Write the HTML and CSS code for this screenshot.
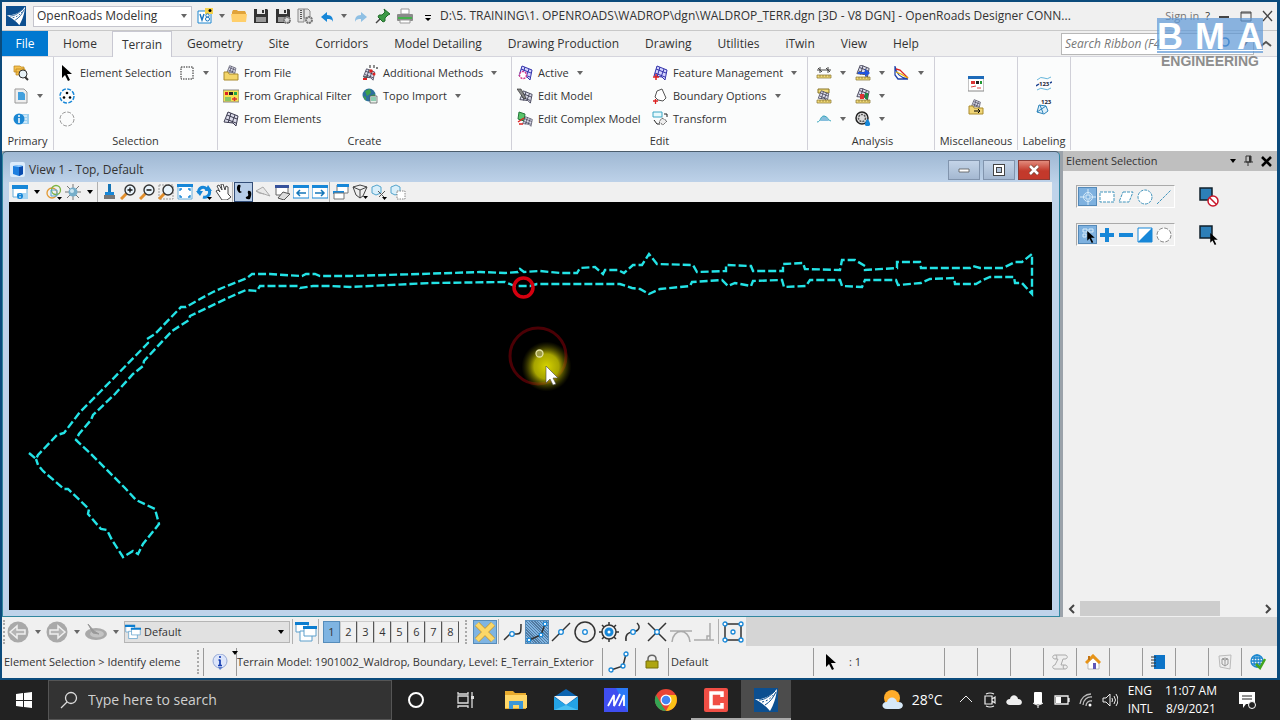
FILE: index.html
```
<!DOCTYPE html>
<html lang="en">
<head>
    <meta charset="UTF-8">
    <meta name="viewport" content="width=device-width, initial-scale=1.0">
    <title>OpenRoads Designer</title>
    <link rel="stylesheet" href="styles.css">
</head>
<body>
    <!-- Shared icons -->
    <svg class="sprite" aria-hidden="true">
        <symbol id="caret" viewBox="0 0 6 4"><path d="M0 0h6L3 4z" fill="currentColor"/></symbol>
        <symbol id="cursor" viewBox="0 0 16 16"><path d="M3 0v13l3-3 3 6 2-1-3-6h5z" fill="#000"/></symbol>
        <symbol id="mesh" viewBox="0 0 16 16"><path d="M5 1l10 4-2 10-3-3-9-1z" fill="#dcdcea" stroke="#3c3c50"/><path d="M4 4l10 4M3 8l10 4M8 2L5 12M12 4L9 12" stroke="#3c3c50" fill="none"/></symbol>
        <symbol id="meshblue" viewBox="0 0 16 16"><path d="M5 1l10 4-2 10-3-3-8-1z" fill="#d4d4ff" stroke="#33a"/><path d="M4 4l10 4M3 8l10 4M8 2L5 12M12 4L9 12" stroke="#33a" fill="none"/></symbol>
        <symbol id="ruler" viewBox="0 0 16 16"><path d="M1 12h14v3H1z" fill="#f3dc7a" stroke="#85702b" stroke-width=".7"/><path d="M4 12v2M7 12v2M10 12v2M13 12v2" stroke="#85702b" stroke-width=".7"/></symbol>
        <symbol id="folder" viewBox="0 0 16 16"><path d="M1 4l1-2h4l1 1h7l1 2v9H1z" fill="#e0a33a"/><path d="M0 6h16l-1 8H1z" fill="#ffcf6b"/></symbol>
        <symbol id="disk" viewBox="0 0 16 16"><path d="M1 1h13l1 1v13H1z" fill="#333"/><path d="M4 1h8v5H4z" fill="#e8e8e8"/><path d="M9 2h2v3H9z" fill="#333"/><path d="M3 9h10v5H3z" fill="#999"/></symbol>
        <symbol id="gear" viewBox="0 0 16 16"><circle cx="12" cy="12" r="3" fill="#ddd" stroke="#777" stroke-width="2" stroke-dasharray="2 .6"/></symbol>
        <symbol id="windows" viewBox="0 0 22 22"><g fill="#fff" stroke="#5c9fcb"><path d="M1 2h12v9H1z"/><path d="M5 10h12v10H5z"/><path d="M9 6h12v9H9z"/></g><path d="M0 1h14v3H0zM8 5h14v3H8z" fill="#0b7dd0"/></symbol>
        <symbol id="roads" viewBox="0 0 24 24"><path d="M0 0h24v24H0z" fill="#0c4f90"/><path d="M1 11C11 12 17 7 23 1c-1 9-3 15-7 22-3-4-8-8-15-12z" fill="#fff"/><path d="M5 12c6 0 11-4 16-9M11 17c5-3 8-7 11-13" fill="none" stroke="#0c4f90" stroke-width="1"/><path d="M8 14c6-1 9-4 13-9" fill="none" stroke="#0c4f90" stroke-dasharray="2 2"/></symbol>
        <symbol id="lens" viewBox="0 0 16 16"><path d="M7 9l-6 6" stroke="#e28f2d" stroke-width="3"/><circle cx="10" cy="6" r="5" fill="#e9f4fc" stroke="#333" stroke-width="1.4"/></symbol>
    </svg>

    <div class="app">
        <!-- Title bar -->
        <header class="titlebar">
            <svg class="logo"><use href="#roads"/></svg>
            <div class="select-wrap workflow">
                <select aria-label="Workflow"><option>OpenRoads Modeling</option></select>
                <svg class="caret"><use href="#caret"/></svg>
            </div>
            <div class="quick-access">
                <button aria-label="V8"><svg class="ic" viewBox="0 0 16 16"><path d="M1 3h13v12H1z" fill="#fff" stroke="#1d86d0"/><path d="M8 0h8v6H8z" fill="#f6d34b"/><path d="M3 6l2 6 2-6" fill="none" stroke="#1573bd" stroke-width="1.4"/><circle cx="10.500" cy="7.500" r="1.700" fill="none" stroke="#1573bd"/><circle cx="10.500" cy="11" r="2" fill="none" stroke="#1573bd"/><circle cx="13" cy="2.500" r="1.500"/></svg></button>
                <svg class="caret"><use href="#caret"/></svg>
                <button aria-label="Open"><svg class="ic"><use href="#folder"/></svg></button>
                <button aria-label="Save"><svg class="ic"><use href="#disk"/></svg></button>
                <button aria-label="Save settings"><svg class="ic"><use href="#disk"/><use href="#gear"/></svg></button>
                <button aria-label="Compress"><svg class="ic" viewBox="0 0 16 16"><path d="M1 1h6v13H1zM7 1h4l2 2v7H7z" fill="#e4e4e4" stroke="#888"/><path d="M4 2v9" stroke="#555" stroke-width="2" stroke-dasharray="1 1"/><use href="#gear" width="16" height="16"/></svg></button>
                <button aria-label="Undo"><svg class="ic" viewBox="0 0 16 16"><path d="M2 9l6-5v3c5 0 6 3 6 7-1-3-3-3-6-3v3z" fill="#1787d8"/></svg></button>
                <svg class="caret"><use href="#caret"/></svg>
                <button aria-label="Redo"><svg class="ic" viewBox="0 0 16 16"><path d="M14 9L8 4v3c-5 0-6 3-6 7 1-3 3-3 6-3v3z" fill="#8fc0e4"/></svg></button>
                <button aria-label="Pin"><svg class="ic" viewBox="0 0 16 16"><path d="M9 1l6 5-2 1-3 3v3l-2 1-5-5 1-2h3l3-3z" fill="#3c9a45" stroke="#226b2b"/><path d="M5 11l-4 4" stroke="#444" stroke-width="1.5"/></svg></button>
                <button aria-label="Print"><svg class="ic" viewBox="0 0 16 16"><path d="M4 1h8v5H4z" fill="#fff" stroke="#999"/><rect y="6" width="16" height="7" rx="1" fill="#8a8a8a"/><path d="M1 9h14v2H1z" fill="#45b14c"/><path d="M3 12h10v3H3z" fill="#fff" stroke="#999"/></svg></button>
                <svg class="caret more" viewBox="0 0 6 7"><path d="M0 0h6v1H0zM0 3h6L3 6z"/></svg>
            </div>
            <h1>D:\5. TRAINING\1. OPENROADS\WADROP\dgn\WALDROP_TERR.dgn [3D - V8 DGN] - OpenRoads Designer CONN...</h1>
            <div class="window-controls">
                <a href="#">Sign in</a>
                <button aria-label="Help">?</button>
                <button aria-label="Minimize"><svg class="ic" viewBox="0 0 16 16"><path d="M3 8h10v2H3z" fill="#444"/></svg></button>
                <button aria-label="Maximize"><svg class="ic" viewBox="0 0 16 16"><path d="M3 4h10v9H3zM3 5h10" fill="none" stroke="#444"/></svg></button>
                <button aria-label="Close"><svg class="ic" viewBox="0 0 16 16"><path d="M3 3l9 10M12 3L3 13" stroke="#444" stroke-width="1.3"/></svg></button>
            </div>
        </header>

        <!-- Ribbon tabs -->
        <nav class="tabs">
            <button class="tab file">File</button>
            <button class="tab home">Home</button>
            <button class="tab active">Terrain</button>
            <button class="tab">Geometry</button>
            <button class="tab">Site</button>
            <button class="tab">Corridors</button>
            <button class="tab">Model Detailing</button>
            <button class="tab">Drawing Production</button>
            <button class="tab">Drawing</button>
            <button class="tab">Utilities</button>
            <button class="tab">iTwin</button>
            <button class="tab">View</button>
            <button class="tab">Help</button>
            <div class="ribbon-search">
                <input type="text" placeholder="Search Ribbon (F4)" aria-label="Search Ribbon">
                <svg class="ic" viewBox="0 0 16 16"><circle cx="9" cy="6" r="4" fill="none" stroke="#1d6fc4" stroke-width="1.700"/><path d="M6 9l-4 5" stroke="#1d6fc4" stroke-width="2"/></svg>
                <svg class="caret"><use href="#caret"/></svg>
            </div>
            <button class="collapse" aria-label="Collapse ribbon"><svg class="ic" viewBox="0 0 16 16"><path d="M3 10l5-4 5 4" fill="none" stroke="#555" stroke-width="2"/></svg></button>
        </nav>

        <!-- Ribbon -->
        <section class="ribbon">
            <div class="group primary">
                <div class="group-body">
                    <div class="col">
                        <button class="cmd"><svg class="ic" viewBox="0 0 16 16"><path d="M1 1h6l1 1h3v5H1zM3 4h9v6H3z" fill="#f5c252" stroke="#b98318" stroke-width=".7"/><circle cx="10" cy="9" r="4" fill="#e6f1f7" stroke="#333"/><path d="M12 12l3 3" stroke="#333" stroke-width="2"/></svg></button>
                        <button class="cmd"><svg class="ic" viewBox="0 0 16 16"><path d="M2 1h9l3 3v11H2z" fill="#eee" stroke="#999"/><path d="M5 4h5l2 2v6H5z" fill="#43a0dd"/></svg><svg class="caret"><use href="#caret"/></svg></button>
                        <button class="cmd"><svg class="ic" viewBox="0 0 16 16"><path d="M6 3h10v10H6z" fill="#9fd1f0"/><path d="M10 5h4M10 8h4M10 11h4" stroke="#fff"/><circle cx="6" cy="8" r="5.500" fill="#1b87d3"/><path d="M6 4v2M6 7v5" stroke="#fff" stroke-width="1.500"/></svg></button>
                    </div>
                </div>
                <div class="group-label">Primary</div>
            </div>
            <div class="group selection">
                <div class="group-body">
                    <div class="col">
                        <button class="cmd"><svg class="ic"><use href="#cursor"/></svg>Element Selection</button>
                        <button class="cmd"><svg class="ic" viewBox="0 0 16 16"><circle cx="8" cy="8" r="7" fill="none" stroke="#1787d8" stroke-width="1.500" stroke-dasharray="4 1.500"/><circle cx="8" cy="5" r="1.300"/><circle cx="5" cy="9.500" r="1.300"/><circle cx="11" cy="9.500" r="1.300"/></svg></button>
                        <button class="cmd"><svg class="ic" viewBox="0 0 16 16"><circle cx="8" cy="8" r="7" fill="none" stroke="#999" stroke-dasharray="4 1.500"/></svg></button>
                    </div>
                    <div class="col">
                        <button class="cmd"><svg class="ic" viewBox="0 0 16 16"><path d="M2 2h12v12H2z" fill="none" stroke="#222" stroke-dasharray="1.500 1"/></svg><svg class="caret"><use href="#caret"/></svg></button>
                    </div>
                </div>
                <div class="group-label">Selection</div>
            </div>
            <div class="group create">
                <div class="group-body">
                    <div class="col">
                        <button class="cmd"><svg class="ic" viewBox="0 0 16 16"><use href="#mesh" width="13" height="10" x="2"/><path d="M1 7h4l1 2h9v6H1z" fill="#f3d569" stroke="#a98a2c"/></svg>From File</button>
                        <button class="cmd"><svg class="ic" viewBox="0 0 16 16"><path d="M0 2h16v12H0z" fill="#f5e04f" stroke="#888"/><path d="M2 4h3v3H2z" fill="#d22"/><path d="M6 4h4v3H6z" fill="#222"/><path d="M11 4h3v3h-3z" fill="#2a4"/><path d="M2 10h6M2 12h6" stroke="#2a7"/><path d="M9 11h5M11.500 9v4" stroke="#d33" stroke-width="1.500"/></svg>From Graphical Filter</button>
                        <button class="cmd"><svg class="ic"><use href="#mesh"/></svg>From Elements</button>
                    </div>
                    <div class="col">
                        <button class="cmd"><svg class="ic" viewBox="0 0 16 16"><use href="#mesh" y="3" width="14" height="13"/><path d="M8 0v3M12 0v3M14 3h2M2 12h4" stroke="#555" stroke-width="1.300"/><circle cx="9" cy="6" r="1.800" fill="#d22"/><circle cx="12" cy="9" r="1.500" fill="#d22"/><path d="M1 14h4" stroke="#d22" stroke-width="2"/></svg>Additional Methods<svg class="caret"><use href="#caret"/></svg></button>
                        <button class="cmd"><svg class="ic" viewBox="0 0 16 16"><circle cx="7" cy="7" r="6.500" fill="#2c6f9c"/><path d="M3 3l5-2 1 4-4 3zM8 8l5-2-1 5-4 1zM1 8l3 1v4z" fill="#3da04b"/><path d="M8 8h7v7H8z" fill="#e7efe9" stroke="#555" stroke-width=".7"/><path d="M9 10h5M9 12h5" stroke="#3a7"/></svg>Topo Import<svg class="caret"><use href="#caret"/></svg></button>
                    </div>
                </div>
                <div class="group-label">Create</div>
            </div>
            <div class="group edit">
                <div class="group-body">
                    <div class="col">
                        <button class="cmd"><svg class="ic" viewBox="0 0 16 16"><use href="#meshblue"/><circle cx="6" cy="10" r="3.500" fill="#fff" stroke="#d2358a" stroke-width="1.500" stroke-dasharray="2 1"/></svg>Active<svg class="caret"><use href="#caret"/></svg></button>
                        <button class="cmd"><svg class="ic" viewBox="0 0 16 16"><use href="#mesh" x="2" y="2" width="14" height="14"/><path d="M0 1l4 0 5 9-2 1z" fill="#888" stroke="#222" stroke-width=".6"/></svg>Edit Model</button>
                        <button class="cmd"><svg class="ic" viewBox="0 0 16 16"><path d="M2 1l6 2-1 7-6-2z" fill="#59c36a" stroke="#25763a"/><use href="#mesh" x="5" y="5" width="11" height="11"/><path d="M1 11l6-4M2 13h4" stroke="#d22" stroke-width="1.500"/></svg>Edit Complex Model</button>
                    </div>
                    <div class="col">
                        <button class="cmd"><svg class="ic" viewBox="0 0 16 16"><use href="#meshblue"/><path d="M1 12h6M4 9v6" stroke="#d22" stroke-width="1.500"/></svg>Feature Management<svg class="caret"><use href="#caret"/></svg></button>
                        <button class="cmd"><svg class="ic" viewBox="0 0 16 16"><path d="M5 3l5-2 4 9-3 3-5-1-3-3z" fill="#fff" stroke="#555"/><path d="M1 13h5M3.500 11v5" stroke="#d22" stroke-width="1.300"/></svg>Boundary Options<svg class="caret"><use href="#caret"/></svg></button>
                        <button class="cmd"><svg class="ic" viewBox="0 0 16 16"><path d="M1 1h9v5H1z" fill="#e8f9fc" stroke="#3aa6c4"/><path d="M12 3h3v3M2 9l3 4h3" fill="none" stroke="#222"/><path d="M10 7l5 3-4 4-4-3z" fill="#eee" stroke="#555" stroke-dasharray="2 1"/></svg>Transform</button>
                    </div>
                </div>
                <div class="group-label">Edit</div>
            </div>
            <div class="group analysis">
                <div class="group-body">
                    <div class="col">
                        <button class="cmd"><svg class="ic" viewBox="0 0 16 16"><path d="M4 2v6M12 2v6M1 5h14M2 3l4 4M10 3l4 4" stroke="#444"/><use href="#ruler" y="-2" width="16" height="16"/></svg><svg class="caret"><use href="#caret"/></svg></button>
                        <button class="cmd"><svg class="ic" viewBox="0 0 16 16"><path d="M2 1h11v4H2z" fill="#f1dc7a" stroke="#887429"/><use href="#mesh" y="2" width="15" height="12"/><use href="#ruler"/></svg></button>
                        <button class="cmd"><svg class="ic" viewBox="0 0 16 16"><path d="M4 10c2-7 6-7 9 0z" fill="#86bedd"/><path d="M1 11c4 0 3-6 7-6s4 5 7 5" fill="none" stroke="#3aa8bd"/></svg><svg class="caret"><use href="#caret"/></svg></button>
                    </div>
                    <div class="col">
                        <button class="cmd"><svg class="ic" viewBox="0 0 16 16"><use href="#mesh" y="-1" width="16" height="14"/><path d="M3 7h7V4l5 4-5 4V9H3z" fill="#25d"/><use href="#ruler"/></svg><svg class="caret"><use href="#caret"/></svg></button>
                        <button class="cmd"><svg class="ic" viewBox="0 0 16 16"><use href="#mesh" y="-1" width="16" height="14"/><path d="M5 6h4v5H5z" fill="#d33"/><path d="M10 5h3v6h-3z" fill="#284"/><use href="#ruler"/></svg><svg class="caret"><use href="#caret"/></svg></button>
                        <button class="cmd"><svg class="ic" viewBox="0 0 16 16"><circle cx="7" cy="7" r="6" fill="#ddd" stroke="#222" stroke-width="1.500"/><circle cx="7" cy="7" r="3.500" fill="none" stroke="#555" stroke-width="1.500" stroke-dasharray="2 1"/><path d="M12.500 8c4 5 3 7 0 7s-4-2 0-7z" fill="#1787d8"/></svg><svg class="caret"><use href="#caret"/></svg></button>
                    </div>
                    <div class="col">
                        <button class="cmd"><svg class="ic" viewBox="0 0 16 16"><path d="M1 1c1 8 6 12 13 13H4L1 10z" fill="#fff" stroke="#24a" stroke-width="1.300"/><path d="M2 4l4 1 8 8" fill="none" stroke="#d22" stroke-width="1.300"/><path d="M2 7l5 2 7 4" fill="none" stroke="#e8b400" stroke-width="1.300"/></svg><svg class="caret"><use href="#caret"/></svg></button>
                    </div>
                </div>
                <div class="group-label">Analysis</div>
            </div>
            <div class="group misc">
                <div class="group-body stack">
                    <button class="cmd"><svg class="ic" viewBox="0 0 16 16"><path d="M0 1h16v14H0z" fill="#fff" stroke="#888"/><path d="M0 0h16v3H0z" fill="#1d6bb9"/><path d="M3 5h4v3H3z" fill="#d33"/><path d="M8 5h3v3H8z" fill="#222"/><path d="M12 5h2v3h-2z" fill="#293"/><path d="M3 11l5-1M9 12h4" stroke="#d44"/></svg></button>
                    <button class="cmd"><svg class="ic" viewBox="0 0 16 16"><use href="#mesh" x="1" width="14" height="10"/><path d="M1 7h4l1 2h9v6H1z" fill="#f0d577" stroke="#a98a2c"/><path d="M6 12h5M10 10l2 2-2 2" fill="none" stroke="#000"/></svg></button>
                </div>
                <div class="group-label">Miscellaneous</div>
            </div>
            <div class="group labeling">
                <div class="group-body stack">
                    <button class="cmd"><svg class="ic" viewBox="0 0 16 16"><path d="M1 4q4-4 7-2t7-1M1 14q4-3 7-1t7-1" fill="none" stroke="#65b5da"/><path d="M0 10l3-2M14 7l2-1" stroke="#1b3f8f" stroke-width="1.500"/><text x="3" y="10" class="icon-text">123</text></svg></button>
                    <button class="cmd"><svg class="ic" viewBox="0 0 16 16"><path d="M3 6l7 1 2 5-4 3-7-2z" fill="#dff0fa" stroke="#2b83ba"/><path d="M4 6l3 8M1 13l9-6" stroke="#2b83ba"/><text x="5" y="5" class="icon-text">123</text></svg></button>
                </div>
                <div class="group-label">Labeling</div>
            </div>
        </section>

        <!-- Workspace -->
        <main class="workspace">
            <section class="view-window">
                <div class="view-title">
                    <svg class="ic" viewBox="0 0 16 16"><rect width="15" height="15" rx="2" fill="#dcecfb"/><path d="M3 4l6-1 4 1v8l-4 2-6-2z" fill="#1d7fe0"/><path d="M9 5l4-1v8l-4 2z" fill="#0b4cae"/><path d="M3 4l6-1 4 1-4 1z" fill="#9bd0ff"/></svg>
                    <span>View 1 - Top, Default</span>
                    <div class="view-controls">
                        <button aria-label="Minimize view"><svg class="ic" viewBox="0 0 16 16"><path d="M3 7h10v3H3z" fill="#fff" stroke="#555" stroke-width=".8"/></svg></button>
                        <button aria-label="Maximize view"><svg class="ic" viewBox="0 0 16 16"><path d="M4 4h8v8H4z" fill="none" stroke="#444" stroke-width="4"/><path d="M4 4h8v8H4z" fill="none" stroke="#fff" stroke-width="2"/></svg></button>
                        <button class="close" aria-label="Close view"><svg class="ic" viewBox="0 0 16 16"><path d="M4 4l8 8M12 4l-8 8" stroke="#743" stroke-width="4"/><path d="M4 4l8 8M12 4l-8 8" stroke="#fff" stroke-width="2.500"/></svg></button>
                    </div>
                </div>
                <div class="view-tools">
                    <button><svg class="ic" viewBox="0 0 16 16"><path d="M1 2h14v11H1z" fill="#fff" stroke="#69aeda"/><path d="M0 1h16v4H0z" fill="#1787d8"/><path d="M5 9h11v6H5z" fill="#a7d5f2"/><circle cx="8" cy="12" r="3" fill="#1787d8"/><path d="M8 10v1M8 12v2" stroke="#fff"/></svg></button>
                    <button class="drop"><svg class="caret"><use href="#caret"/></svg></button>
                    <button><svg class="ic" viewBox="0 0 16 16"><circle cx="6" cy="9" r="5" fill="none" stroke="#e39a34" stroke-width="1.300"/><circle cx="10" cy="6" r="4.500" fill="none" stroke="#7bb443" stroke-width="1.300"/><path d="M5 6h6v6H5z" fill="none" stroke="#55a6d8"/><path d="M11 13h5l-2.500 3z"/></svg></button>
                    <button><svg class="ic" viewBox="0 0 16 16"><path d="M8 0v16M0 8h16M2 2l12 12M14 2L2 14" stroke="#777"/><circle cx="8" cy="8" r="4.500" fill="#76aeca"/><circle cx="7" cy="7" r="2" fill="#cbe5f1"/></svg></button>
                    <button class="drop"><svg class="caret"><use href="#caret"/></svg></button>
                    <i class="sep"></i>
                    <button><svg class="ic" viewBox="0 0 16 16"><path d="M7 0h3v8H7z" fill="#1574b5"/><path d="M4 8h9v3H4z" fill="#1787d8"/><path d="M3 11h11v4H3z" fill="#777"/></svg></button>
                    <button><svg class="ic" viewBox="0 0 16 16"><use href="#lens"/><path d="M7.500 6h5M10 3.500v5" stroke="#111" stroke-width="1.300"/></svg></button>
                    <button><svg class="ic" viewBox="0 0 16 16"><use href="#lens"/><path d="M7.500 6h5" stroke="#111" stroke-width="1.500"/></svg></button>
                    <button><svg class="ic" viewBox="0 0 16 16"><path d="M1 1h14v14H1z" fill="none" stroke="#999" stroke-dasharray="2 1"/><use href="#lens"/></svg></button>
                    <button><svg class="ic" viewBox="0 0 16 16"><path d="M1 1h14v14H1z" fill="#fff" stroke="#69aeda"/><path d="M0 0h16v3H0z" fill="#1787d8"/><path d="M3 7V5h2M11 5h2v2M3 11v2h2M11 13h2v-2" fill="none" stroke="#1787d8" stroke-width="1.300"/></svg></button>
                    <button><svg class="ic" viewBox="0 0 16 16"><path d="M3 9a4 4 0 0 1 8-3M13 6a5 5 0 0 1-6 7" fill="none" stroke="#1787d8" stroke-width="3"/><path d="M0 7h7l-3 5zM9 7h7l-4-6z" fill="#1787d8"/><path d="M11 13h5l-2.500 3z"/></svg></button>
                    <button><svg class="ic" viewBox="0 0 16 16"><path d="M5 13L1 7l2-1 2 2-3-6 2-1 3 5-1-6h2l2 6 1-4 2 1v7l3 3-4 3H7z" fill="#fff" stroke="#444"/></svg></button>
                    <i class="sep"></i>
                    <button class="on"><svg class="ic" viewBox="0 0 16 16"><path d="M2 1c3-1 3 1 2 3v3l2 1-2 1C1 8 0 3 2 1zM12 7c4-1 4 4 2 8-3 1-5-1-4-2l2-1c1-2-1-3 0-5z"/></svg></button>
                    <button><svg class="ic" viewBox="0 0 16 16"><path d="M1 7l7-4 7 9-9-3zM1 7l3 2 5 1" fill="#e8e8e8" stroke="#aaa"/></svg></button>
                    <button><svg class="ic" viewBox="0 0 16 16"><path d="M2 2h12v9H2z" fill="#fff" stroke="#666"/><path d="M1 1h14v3H1z" fill="#35519b"/><path d="M4 14l5-6 7 2-6 6z" fill="#ddd" stroke="#555"/></svg></button>
                    <button><svg class="ic" viewBox="0 0 16 16"><path d="M0 2h16v12H0z" fill="#fff" stroke="#1787d8"/><path d="M0 1h16v3H0z" fill="#1787d8"/><path d="M13 9H4M7 6L4 9l3 3" fill="none" stroke="#1476b9" stroke-width="1.500"/></svg></button>
                    <button><svg class="ic" viewBox="0 0 16 16"><path d="M0 2h16v12H0z" fill="#fff" stroke="#1787d8"/><path d="M0 1h16v3H0z" fill="#1787d8"/><path d="M3 9h9M9 6l3 3-3 3" fill="none" stroke="#1476b9" stroke-width="1.500"/></svg></button>
                    <i class="sep"></i>
                    <button><svg class="ic" viewBox="0 0 16 16"><path d="M4 1h11v8H4z" fill="#fff" stroke="#777"/><path d="M4 0h12v3H4zM0 7h11v3H0z" fill="#1787d8"/><path d="M1 9h10v6H1z" fill="#fff" stroke="#777"/></svg></button>
                    <button><svg class="ic" viewBox="0 0 16 16"><path d="M1 3l7-2 7 2-4 9-3 2-4-3zM1 3l7 3 7-3M8 6v8" fill="#eee" stroke="#444"/><path d="M11 12h5l-2.500 3z"/></svg></button>
                    <button><svg class="ic" viewBox="0 0 16 16"><path d="M1 3l5-2 4 2v6l-5 2-4-2z" fill="#d9effa" stroke="#53a4cd"/><path d="M7 7l6 6M14 7l-6 6" stroke="#555"/><path d="M11 13h5l-2.500 3z"/></svg></button>
                    <button><svg class="ic" viewBox="0 0 16 16"><path d="M1 3l5-2 4 2v6l-5 2-4-2z" fill="#d9effa" stroke="#53a4cd"/><path d="M7 7h8v8H7z" fill="#fff" stroke="#888" stroke-dasharray="1.500 1"/></svg></button>
                </div>
                <svg class="canvas" viewBox="9 202 1043 408">
                    <defs>
                        <radialGradient id="glow"><stop offset="0" stop-color="#d6d300"/><stop offset=".5" stop-color="#b9b600" stop-opacity=".9"/><stop offset="1" stop-color="#5a5800" stop-opacity="0"/></radialGradient>
                    </defs>
                    <!-- terrain boundary -->
                    <path class="boundary" d="M29 453L36 459L38 455L57 435L64 433L80 412L102 390L148 343L147 339L155 334L181 307L186 307L200 299L213 292L222 288L247 278L252 274L270 274L284 275L302 276L306 274L315 274L320 276L350 276L420 274L480 272L505 273L518 272L520 269L524 272L540 271L560 273L577 273L580 268L595 267L603 274L605 270L618 270L624 273L633 265L642 265L649 254L657 264L693 265L697 272L726 271L726 265L751 266L753 271L783 271L783 264L803 263L805 269L840 270L842 260L855 260L865 266L865 270L897 268L897 262L920 262L921 268L970 268L973 266L980 268L1003 268L1015 262L1022 262L1032 254L1032 294L1022 283L1015 283L1014 277L990 277L983 280L976 284L955 284L954 278L930 279L921 283L898 285L896 280L865 280L862 287L842 286L840 280L810 280L806 286L784 287L782 280L753 281L751 286L735 283L728 286L722 280L692 282L690 286L660 289L649 294L640 289L632 288L620 284L537 284L530 286L515 286L505 282L430 283L350 287L330 286L313 286L300 288L298 286L260 286L257 291L246 290L230 297L190 316L189 320L172 331L157 347L144 361L143 366L133 374L115 394L93 415L91 420L79 434L76 440L90 453L125 488L136 500L155 509L159 524L143 544L138 554L133 551L123 557L112 540L107 530L101 529L88 514L89 509L68 489L64 489L43 471L38 465L36 459"/>
                    <circle cx="523.500" cy="287.500" r="9.500" fill="none" stroke="#d4000f" stroke-width="3.500"/>
                    <circle cx="538" cy="356" r="28" fill="none" stroke="#4b0005" stroke-width="3"/>
                    <circle cx="546.500" cy="366.500" r="25" fill="url(#glow)"/>
                    <circle cx="539.500" cy="353.500" r="3.500" fill="#9c9a45" stroke="#e3e2a4" stroke-width="1.300"/>
                    <path d="M546 366v17l4-4 3 6 3-1-3-6h5z" fill="#fff" stroke="#444" stroke-width=".6"/>
                </svg>
            </section>

            <aside class="panel">
                <div class="panel-head">
                    <h2>Element Selection</h2>
                    <button aria-label="Panel menu"><svg class="caret"><use href="#caret"/></svg></button>
                    <button aria-label="Pin panel"><svg class="ic" viewBox="0 0 16 16"><path d="M6 3h5v6H6zM4 9h9M8 9v4" fill="none" stroke="#333"/><path d="M9 3h2v6H9z" fill="#333"/></svg></button>
                    <button aria-label="Close panel"><svg class="ic" viewBox="0 0 16 16"><path d="M3 4l9 9M12 4l-9 9" stroke="#000" stroke-width="2.500"/></svg></button>
                </div>
                <div class="panel-body">
                    <div class="tool-row">
                        <div class="tool-set">
                            <button class="on"><svg class="ic" viewBox="0 0 16 16"><circle cx="8" cy="8" r="4.500" fill="none" stroke="#d9edfa"/><path d="M6 6h4v4H6zM8 0v5M8 11v5M0 8h5M11 8h5" fill="none" stroke="#d9edfa"/></svg></button>
                            <button><svg class="ic" viewBox="0 0 16 16"><path d="M1 3h14v10H1z" class="fence"/></svg></button>
                            <button><svg class="ic" viewBox="0 0 16 16"><path d="M5 3h10l-4 10H1z" class="fence"/></svg></button>
                            <button><svg class="ic" viewBox="0 0 16 16"><circle cx="8" cy="8" r="7" class="fence"/></svg></button>
                            <button><svg class="ic" viewBox="0 0 16 16"><path d="M1 15L15 1" class="fence"/></svg></button>
                        </div>
                        <button class="side-tool"><svg viewBox="0 0 20 20"><path d="M1 1h12v12H1z" fill="#2d7fb8" stroke="#10202b" stroke-width="1.500"/><circle cx="14" cy="14" r="5" fill="#fff" stroke="#c9182b" stroke-width="1.500"/><path d="M10.500 10.500l7 7" stroke="#c9182b" stroke-width="1.500"/></svg></button>
                    </div>
                    <div class="tool-row">
                        <div class="tool-set">
                            <button class="on"><svg class="ic" viewBox="0 0 16 16"><path d="M3 2h4v3H3zM9 2h4v3H9zM3 7h3v3H3z" fill="none" stroke="#d9edfa"/><use href="#cursor" x="5" y="4" width="12" height="12"/></svg></button>
                            <button><svg class="ic" viewBox="0 0 16 16"><path d="M8 1v14M1 8h14" stroke="#1787d8" stroke-width="4"/></svg></button>
                            <button><svg class="ic" viewBox="0 0 16 16"><path d="M1 8h14" stroke="#1787d8" stroke-width="4"/></svg></button>
                            <button><svg class="ic" viewBox="0 0 16 16"><path d="M1 1h14v14H1z" fill="#fff" stroke="#1787d8"/><path d="M1 15L15 1v14z" fill="#1787d8"/></svg></button>
                            <button><svg class="ic" viewBox="0 0 16 16"><circle cx="8" cy="8" r="7" fill="#fff" stroke="#888" stroke-dasharray="4 1.500"/></svg></button>
                        </div>
                        <button class="side-tool"><svg viewBox="0 0 20 20"><path d="M1 1h12v12H1z" fill="#2d7fb8" stroke="#10202b" stroke-width="1.500"/><use href="#cursor" x="9" y="8" width="12" height="12"/></svg></button>
                    </div>
                </div>
                <div class="scrollbar">
                    <svg class="ic" viewBox="0 0 16 16"><path d="M11 4L7 8l4 4" fill="none" stroke="#444" stroke-width="2"/></svg>
                    <div class="track"><div class="thumb"></div></div>
                    <svg class="ic" viewBox="0 0 16 16"><path d="M5 4l4 4-4 4" fill="none" stroke="#444" stroke-width="2"/></svg>
                </div>
            </aside>
        </main>

        <!-- View groups and snaps -->
        <div class="dock">
            <div class="dock-bar">
                <i class="grip first"></i>
                <button class="nav-btn" aria-label="Back"><svg viewBox="0 0 22 22"><circle cx="11" cy="11" r="10.500" fill="#a9a9a9"/><path d="M3 11l7-6v4h8v4h-8v4z" fill="#b5b5b5" stroke="#eee" stroke-width="1.500"/></svg></button>
                <button class="nav-drop"><svg class="caret"><use href="#caret"/></svg></button>
                <button class="nav-btn" aria-label="Forward"><svg viewBox="0 0 22 22"><circle cx="11" cy="11" r="10.500" fill="#a9a9a9"/><path d="M19 11l-7-6v4H4v4h8v4z" fill="#b5b5b5" stroke="#eee" stroke-width="1.500"/></svg></button>
                <button class="nav-drop"><svg class="caret"><use href="#caret"/></svg></button>
                <button class="nav-btn" aria-label="Models"><svg viewBox="0 0 22 22"><ellipse cx="11" cy="13" rx="11" ry="6" fill="#a9a9a9"/><ellipse cx="12" cy="13" rx="7" ry="3.500" fill="#c4c4c4"/><path d="M3 3l6 7 5 3-6-1z" fill="#999" stroke="#999"/></svg></button>
                <button class="nav-drop"><svg class="caret"><use href="#caret"/></svg></button>
                <div class="select-wrap view-group">
                    <svg class="ic"><use href="#windows"/></svg>
                    <select aria-label="View group"><option>Default</option></select>
                    <svg class="caret"><use href="#caret"/></svg>
                </div>
                <i class="sep"></i>
                <button class="snap"><svg viewBox="0 0 22 22"><use href="#windows"/></svg></button>
                <i class="sep"></i>
                <div class="view-numbers">
                    <button class="on">1</button><button>2</button><button>3</button><button>4</button><button>5</button><button>6</button><button>7</button><button>8</button>
                </div>
                <i class="grip second"></i>
                <button class="snap on"><svg viewBox="0 0 22 22"><path d="M3 3l16 16M19 3L3 19" stroke="#c99e34" stroke-width="6"/><path d="M3 3l16 16M19 3L3 19" stroke="#fbd768" stroke-width="4.500"/></svg></button>
                <i class="sep wide"></i>
                <button class="snap"><svg viewBox="0 0 22 22"><path d="M2 19l6-6h7c4 0 4-2 4-10" class="line"/><circle cx="10" cy="13" r="2.300" class="node"/></svg></button>
                <button class="snap on dotted"><svg viewBox="0 0 22 22"><path d="M3 19l12-5 4-11" class="line"/><circle cx="3" cy="19" r="1.800" class="node"/><circle cx="15" cy="14" r="1.800" class="node"/><circle cx="19" cy="3" r="1.800" class="node"/></svg></button>
                <button class="snap"><svg viewBox="0 0 22 22"><path d="M2 20L20 2" class="line"/><circle cx="11" cy="11" r="2.300" class="node"/></svg></button>
                <button class="snap"><svg viewBox="0 0 22 22"><circle cx="11" cy="11" r="10" class="line"/><circle cx="11" cy="11" r="2.300" class="node"/></svg></button>
                <button class="snap"><svg viewBox="0 0 22 22"><circle cx="11" cy="11" r="7" class="line"/><path d="M11 1v3M11 18v3M1 11h3M18 11h3M4 4l2 2M16 16l2 2M18 4l-2 2M6 16l-2 2" class="line"/><circle cx="11" cy="11" r="3" class="node thick"/></svg></button>
                <button class="snap"><svg viewBox="0 0 22 22"><path d="M4 20c-1-6 2-9 7-9 6-1 8-5 4-9" class="line"/><circle cx="11" cy="11" r="2.300" class="node"/></svg></button>
                <button class="snap"><svg viewBox="0 0 22 22"><path d="M2 2l18 18M20 2L2 20" class="line"/><circle cx="11" cy="11" r="2.300" class="node"/></svg></button>
                <button class="snap"><svg viewBox="0 0 22 22"><path d="M0 10h22M2 21c1-14 17-14 18 0" class="line dim"/></svg></button>
                <button class="snap"><svg viewBox="0 0 22 22"><path d="M0 19h20M16 2v17M13 19v-4h3" class="line dim"/></svg></button>
                <i class="sep wide"></i>
                <button class="snap"><svg viewBox="0 0 22 22"><path d="M3 3h16v16H3z" class="line"/><g class="node"><circle cx="3" cy="3" r="2"/><circle cx="19" cy="3" r="2"/><circle cx="3" cy="19" r="2"/><circle cx="19" cy="19" r="2"/><circle cx="11" cy="11" r="2"/></g></svg></button>
            </div>
        </div>

        <!-- Status bar -->
        <footer class="status">
            <div class="prompt">Element Selection &gt; Identify eleme</div>
            <i class="grip"></i>
            <div class="cell info"><svg class="ic" viewBox="0 0 16 16"><circle cx="8" cy="7" r="7" fill="#dce5fa" stroke="#95a9d6"/><path d="M6 13l2 3 3-3z" fill="#5f7fcb"/><path d="M8 2v2M8 6v6M6.500 6h2M6 11.500h4" stroke="#153db0" stroke-width="1.700"/></svg></div>
            <div class="cell message"><svg class="caret"><use href="#caret"/></svg><span>Terrain Model: 1901002_Waldrop, Boundary, Level: E_Terrain_Exterior</span></div>
            <div class="cell"><svg class="big" viewBox="0 0 22 22"><path d="M3 19l12-4 3-12" class="line"/><circle cx="3" cy="19" r="2" class="node"/><circle cx="15" cy="15" r="2" class="node"/><circle cx="18" cy="3" r="2" class="node"/></svg></div>
            <div class="cell"><svg class="ic" viewBox="0 0 16 16"><path d="M4 8V5c0-5 8-5 8 0v3" fill="none" stroke="#666" stroke-width="1.500"/><path d="M2 7h12v7H2z" fill="#aea510" stroke="#77700a"/></svg></div>
            <div class="cell level">Default</div>
            <div class="cell count"><svg class="ic"><use href="#cursor"/></svg>: 1</div>
            <div class="cell"></div>
            <div class="cell"></div>
            <div class="cell"></div>
            <div class="cell"><svg class="ic" viewBox="0 0 16 16"><path d="M3 1h10c3 0 3 4 0 4h-2l-2 6h4c3 0 3 4 0 4H3c-3 0-3-4 0-4l3-6H3C0 5 0 1 3 1zM4 1q2 2 0 4M12 11q-2 2 0 4" fill="#eee" stroke="#aaa"/></svg></div>
            <div class="cell"><svg class="ic" viewBox="0 0 16 16"><path d="M3 8v7h11V8L8 4z" fill="#fff" stroke="#999" stroke-width=".6"/><path d="M1 9l7-7 7 7" fill="none" stroke="#e79418" stroke-width="3"/><path d="M3 2h2v4H3z" fill="#c47412"/><path d="M8 9h3v6H8z" fill="#6158b6"/></svg></div>
            <div class="cell"></div>
            <div class="cell"><svg class="ic" viewBox="0 0 16 16"><path d="M3 1h11v14H3z" fill="#0c74c8"/><path d="M0 3h5M0 6h5M0 9h5M0 12h5" stroke="#333"/></svg></div>
            <div class="cell"></div>
            <div class="cell"><svg class="ic" viewBox="0 0 16 16"><path d="M2 2l12-1-1 14-10-2z" fill="#eee" stroke="#bbb"/><path d="M5 5l3-1 3 1v5l-3 2-3-2zM5 5l3 1 3-1M8 6v6" fill="none" stroke="#999"/></svg></div>
            <div class="cell"><svg class="ic" viewBox="0 0 16 16"><g fill="none" stroke="#1b87cf" stroke-width="1.300"><circle cx="7" cy="7" r="6"/><ellipse cx="7" cy="7" rx="3" ry="6"/><path d="M1 7h12M2 4h10M2 10h10M7 1v12"/></g><path d="M6 10l4 4 5-9" fill="none" stroke="#43a51f" stroke-width="2.500"/></svg></div>
        </footer>

        <!-- Watermark -->
        <div class="watermark">
            <div class="mark"><span>B</span><span>M</span><span>A</span></div>
            <div class="mark-sub">ENGINEERING</div>
        </div>
    </div>

    <!-- Taskbar -->
    <div class="taskbar">
        <button class="start" aria-label="Start"><svg class="ic" viewBox="0 0 16 16"><path d="M0 2l7-1v7H0zM8 1l8-1v8H8zM0 9h7v6l-7-1zM8 9h8v7l-8-1z" fill="#fff"/></svg></button>
        <div class="task-search">
            <svg viewBox="0 0 20 20"><circle cx="12" cy="8" r="5.500" fill="none" stroke="#ddd" stroke-width="1.300"/><path d="M8 12l-6 6" stroke="#ddd" stroke-width="1.300"/></svg>
            <input type="text" placeholder="Type here to search" aria-label="Type here to search">
        </div>
        <div class="pinned">
            <button aria-label="Cortana"><svg viewBox="0 0 24 24"><circle cx="12" cy="12" r="7" fill="none" stroke="#fff" stroke-width="2"/></svg></button>
            <button aria-label="Task view"><svg viewBox="0 0 24 24"><path d="M4 8h10v7H4zM4 4v2h10V4M4 20v-2h10v2M18 4v16" fill="none" stroke="#ddd" stroke-width="1.300"/><path d="M17 8h3v3h-3z" fill="#ddd"/></svg></button>
            <button aria-label="File Explorer"><svg viewBox="0 0 24 24"><path d="M1 3h8l2 2h11v16H1z" fill="#e8ab2e"/><path d="M1 7h22v13H1z" fill="#ffd768"/><path d="M5 21v-8h14v8h-4v-4H9v4z" fill="#3d97d8"/></svg></button>
            <button aria-label="Mail"><svg viewBox="0 0 24 24"><path d="M0 9l12-8 12 8v13H0z" fill="#0c64b0"/><path d="M0 8h24L12 17z" fill="#f5f5f5"/><path d="M0 9l12 8 12-8v13H0z" fill="#24a3e5"/><path d="M0 22l12-5 12 5z" fill="#49bff1"/></svg></button>
            <button aria-label="App"><svg viewBox="0 0 24 24"><path d="M0 0h24v24H0z" fill="#3f4ef0"/><path d="M12 0h12v24z" fill="#2a79f6"/><path d="M4 18l6-11v11l6-12M15 18l5-11v11" fill="none" stroke="#fff" stroke-width="1.800"/></svg></button>
            <button aria-label="Chrome"><svg viewBox="0 0 24 24"><circle cx="12" cy="12" r="11" fill="#e94435"/><path d="M2 7l7 12 3 4A11 11 0 0 1 2 7z" fill="#35a553"/><path d="M12 7h10c3 8-2 16-10 16l5-9z" fill="#fbc116"/><circle cx="12" cy="12" r="5.500" fill="#fff"/><circle cx="12" cy="12" r="4.300" fill="#4384f3"/></svg></button>
            <button class="running" aria-label="Camtasia"><svg viewBox="0 0 24 24"><rect width="24" height="24" rx="2" fill="#f04e45"/><path d="M18 9V5H7v14h11v-4" fill="none" stroke="#fff" stroke-width="3.500"/></svg></button>
            <button class="running current" aria-label="OpenRoads"><svg viewBox="0 0 24 24"><use href="#roads"/></svg></button>
        </div>
        <div class="tray">
            <svg class="weather" viewBox="0 0 22 22"><circle cx="10" cy="9" r="8" fill="#ffac2a"/><path d="M5 20c-7 0-5-8 0-7 1-6 9-6 10 0 8-1 7 7 2 7z" fill="#d7e9f8"/></svg>
            <span class="temp">28°C</span>
            <svg class="ic" viewBox="0 0 16 16"><path d="M2 10l6-6 6 6" fill="none" stroke="#eee"/></svg>
            <svg class="ic" viewBox="0 0 16 16"><path d="M3 4h7v8H3zM10 7l3-2v6l-3-2M4 2q4-2 8 0M4 14q4 2 8 0" fill="none" stroke="#eee" stroke-width="1.200"/></svg>
            <svg class="ic" viewBox="0 0 16 16"><path d="M4 13c-5 0-5-6 0-6 1-5 7-5 8 0 5 0 5 6 1 6z" fill="#eee"/></svg>
            <svg class="ic" viewBox="0 0 16 16"><rect x="4" width="8" height="12" rx="1" fill="#fff"/><path d="M3 11q5 4 10 0M8 13v3" fill="none" stroke="#fff"/></svg>
            <svg class="ic" viewBox="0 0 16 16"><path d="M1 4h13v8H1zM15 6v4" fill="none" stroke="#eee" stroke-width="1.300"/><path d="M2 5h5v6H2z" fill="#fff"/></svg>
            <svg class="ic" viewBox="0 0 16 16"><path d="M2 12A11 11 0 0 1 13 2M5 13a8 8 0 0 1 9-8M8 14a5 5 0 0 1 6-5" fill="none" stroke="#bbb" stroke-width="1.300"/><circle cx="12" cy="13" r="1.500" fill="#fff"/></svg>
            <svg class="ic" viewBox="0 0 16 16"><path d="M1 6h3l4-4v12l-4-4H1zM10 6q1 2 0 4M12 4q3 4 0 8M14 2q4 6 0 12" fill="none" stroke="#eee"/></svg>
            <div class="lang"><span>ENG</span><span>INTL</span></div>
            <div class="clock"><span>11:07 AM</span><span>8/9/2021</span></div>
            <svg class="notify" viewBox="0 0 20 20"><path d="M2 2h16v12H9l-3 4v-4H2z" fill="#fff"/><path d="M5 6h10M5 9h10" stroke="#222"/><circle cx="15" cy="15" r="3.500" fill="#222" stroke="#fff"/></svg>
        </div>
    </div>
</body>
</html>
```
FILE: styles.css
```
/* General */
* {
    box-sizing: border-box;
}

body {
    margin: 0;
    height: 100vh;
    display: flex;
    flex-direction: column;
    overflow: hidden;
    background: #222;
    font-family: "Open Sans", "Noto Sans", sans-serif;
    font-size: 11px;
    line-height: 16px;
    color: #333;
}

button {
    display: flex;
    align-items: center;
    justify-content: center;
    margin: 0;
    padding: 0;
    border: none;
    background: none;
    font: inherit;
    color: inherit;
}

select,
input {
    font: inherit;
    color: inherit;
}

svg {
    flex: none;
    display: block;
}

.sprite {
    position: absolute;
    width: 0;
    height: 0;
}

.ic {
    width: 16px;
    height: 16px;
}

.caret {
    width: 6px;
    height: 4px;
    color: #666;
}

.icon-text {
    font-size: 6px;
    font-weight: bold;
    fill: #223;
}

.sep {
    width: 2px;
    align-self: stretch;
    border-left: 1px solid #b0b0b0;
}

.sep.wide {
    margin: 0 1px;
}

.grip {
    width: 4px;
    height: 24px;
    margin: 0 2px;
    border-left: 2px dotted #aaa;
}

.grip.first {
    width: 3px;
    margin: 0 1px 0 0;
}

.grip.second {
    margin: 0 4px;
}

.app {
    position: relative;
    flex: 1;
    min-height: 0;
    display: flex;
    flex-direction: column;
    border: 2px solid #0b4b7c;
    border-right-width: 3px;
    background: #f0f0f0;
}

/* Title bar */
.titlebar {
    height: 29px;
    display: flex;
    align-items: center;
    padding-left: 4px;
    border-bottom: 1px solid #c8c8c8;
}

.logo {
    width: 20px;
    height: 20px;
    margin-right: 7px;
}

.select-wrap {
    position: relative;
    display: flex;
    align-items: center;
}

.select-wrap select {
    flex: 1;
    height: 100%;
    padding: 0 3px;
    border: none;
    background: none;
    appearance: none;
}

.workflow {
    width: 159px;
    height: 21px;
    border: 1px solid #c4c4cc;
    background: #fff;
    font-size: 12px;
}

.workflow .caret {
    margin-right: 4px;
}

.quick-access {
    display: flex;
    align-items: center;
    gap: 6px;
    margin-left: 5px;
}

.quick-access .more {
    height: 7px;
    margin: 4px 9px 0 6px;
}

.titlebar h1 {
    flex: 1;
    margin: 0;
    font-size: 12px;
    font-weight: normal;
    white-space: nowrap;
}

.window-controls {
    display: flex;
    align-items: center;
    gap: 6px;
    padding-right: 1px;
}

.window-controls a {
    color: #777;
    text-decoration: none;
}

/* Ribbon tabs */
.tabs {
    height: 26px;
    display: flex;
    border-bottom: 1px solid #d5d5dd;
}

.tab {
    height: 25px;
    padding: 0 13px;
    font-size: 12px;
    white-space: nowrap;
}

.tab.file {
    width: 46px;
    background: #0078d0;
    color: #fff;
}

.tab.home {
    width: 64px;
}

.tab.active {
    width: 60px;
    height: 26px;
    margin-right: 2px;
    border: 1px solid #c8c8d2;
    border-bottom: none;
    background: #fbfcfc;
}

.ribbon-search {
    width: 193px;
    height: 22px;
    display: flex;
    align-items: center;
    margin: 2px 0 0 auto;
    border: 1px solid #b8b8b8;
    background: #fff;
    font-size: 12px;
}

.ribbon-search input {
    flex: 1;
    min-width: 0;
    padding: 0 3px;
    border: none;
    background: none;
    outline: none;
    font-style: italic;
}

.ribbon-search input::placeholder {
    color: #777;
}

.ribbon-search .caret {
    margin: 0 5px 0 10px;
}

.collapse {
    margin: 0 3px 0 4px;
}

/* Ribbon groups */
.ribbon {
    height: 94px;
    display: flex;
    background: #fbfcfc;
}

.group {
    height: 93px;
    display: flex;
    flex-direction: column;
    padding: 4px 0 0 5px;
    border-right: 1px solid #d0d0d8;
}

.group-body {
    flex: 1;
    display: flex;
}

.group-label {
    height: 17px;
    margin-left: -5px;
    text-align: center;
}

.col {
    display: flex;
    flex-direction: column;
    align-items: flex-start;
}

.cmd {
    height: 23px;
    gap: 5px;
    white-space: nowrap;
}

.cmd .caret {
    margin-left: 3px;
}

.primary {
    width: 52px;
    padding-left: 11px;
}

.primary .group-label {
    margin-left: -11px;
}

.selection {
    width: 164px;
}

.selection .col {
    margin-right: 8px;
}

.create {
    width: 294px;
}

.create .col:first-child {
    width: 139px;
}

.edit {
    width: 296px;
}

.edit .col:first-child {
    width: 135px;
}

.analysis {
    width: 127px;
    padding-left: 8px;
}

.analysis .col {
    width: 39px;
}

.group-body.stack {
    flex-direction: column;
    padding-top: 11px;
    align-items: center;
}

.misc {
    width: 83px;
    padding-left: 0;
}

.labeling {
    width: 53px;
    padding-left: 0;
}

.misc .group-label,
.labeling .group-label {
    margin-left: 0;
}

/* Workspace */
.workspace {
    flex: 1;
    min-height: 0;
    display: flex;
    gap: 3px;
    background: #9ba2aa;
}

.view-window {
    flex: 1;
    min-width: 0;
    display: flex;
    flex-direction: column;
    padding: 0 7px 6px 6px;
    border: 1px solid #32879f;
    border-top-color: #4b5c6b;
    border-radius: 5px 5px 0 0;
    background: linear-gradient(#9fb8d3, #bfd3ea 32px);
}

.view-title {
    height: 30px;
    display: flex;
    align-items: center;
    gap: 3px;
    padding: 6px 2px 0 1px;
    font-size: 12px;
}

.view-controls {
    display: flex;
    gap: 3px;
    margin-left: auto;
}

.view-controls button {
    width: 32px;
    height: 20px;
    border: 1px solid #8194ad;
    background: linear-gradient(#c4d4e8, #a4b8d1);
}

.view-controls .close {
    border-color: #8b3a34;
    background: linear-gradient(#e28b7c, #c3392b 55%);
}

.view-tools {
    height: 20px;
    display: flex;
    padding-left: 1px;
    background: #f0f0f0;
}

.view-tools button {
    width: 19px;
}

.view-tools .drop {
    width: 15px;
}

.view-tools .caret,
.panel-head .caret,
.view-group .caret {
    width: 8px;
    height: 4px;
    color: #000;
}

.view-tools .on {
    border: 1px solid #334e78;
    background: #b7cde8;
}

.canvas {
    flex: 1 1 0;
    min-height: 0;
    width: 100%;
    background: #000;
}

.boundary {
    fill: none;
    stroke: #23e3e6;
    stroke-width: 2.4;
    stroke-dasharray: 8 3;
}

/* Element selection panel */
.panel {
    width: 214px;
    display: flex;
    flex-direction: column;
    background: #f0f0f0;
}

.panel-head {
    height: 20px;
    display: flex;
    align-items: center;
    gap: 3px;
    padding: 0 2px 0 3px;
    background: #bfbfbf;
}

.panel-head h2 {
    flex: 1;
    margin: 0;
    font-size: 11px;
    font-weight: normal;
}

.panel-body {
    flex: 1;
    display: flex;
    flex-direction: column;
    gap: 15px;
    padding: 14px 13px;
}

.tool-row {
    display: flex;
    align-items: center;
    gap: 24px;
}

.tool-set {
    display: flex;
    padding: 1px;
    border: 1px solid #fff;
    border-top-color: #aaa;
    border-left-color: #aaa;
}

.tool-set button {
    width: 19px;
    height: 19px;
}

.tool-set .on {
    background: #7eb1df;
    border: 1px solid #5489b8;
}

.fence {
    fill: #fff;
    stroke: #4295bd;
    stroke-dasharray: 3 1;
}

.side-tool svg {
    width: 20px;
    height: 20px;
}

.scrollbar {
    height: 17px;
    display: flex;
    align-items: center;
}

.track {
    flex: 1;
    align-self: stretch;
    margin: 1px;
}

.thumb {
    width: 78%;
    height: 100%;
    background: #cdcdcd;
}

/* Dock under the view */
.dock {
    height: 29px;
    display: flex;
    background: #d5d5d5;
}

.dock-bar {
    display: flex;
    align-items: center;
    background: #f0f0f0;
    padding: 2px 1px;
}

.nav-btn {
    width: 22px;
}

.nav-btn svg,
.snap svg {
    width: 22px;
    height: 22px;
}

.nav-drop {
    width: 17px;
}

.nav-drop .caret {
    width: 8px;
    height: 4px;
}

.view-group {
    width: 166px;
    height: 22px;
    margin-right: 2px;
    border: 1px solid #b5b5b5;
    background: #e1e1e1;
}

.view-group .caret {
    margin-right: 4px;
}

.snap {
    width: 24px;
    height: 24px;
}

.snap.on,
.view-numbers .on {
    background: #7fb4e2;
    border: 1px solid #568cba;
}

.snap.dotted {
    background: repeating-linear-gradient(45deg, #7fb4e2 0 1px, #527a9f 1px 2px);
}

.view-numbers {
    display: flex;
    margin: 0 2px 0 3px;
}

.view-numbers button {
    width: 17px;
    height: 22px;
    border: 1px solid #ccc;
    border-right-color: #555;
}

.line {
    fill: none;
    stroke: #333;
    stroke-width: 1.5;
}

.line.dim {
    stroke: #aaa;
}

.node {
    fill: #fff;
    stroke: #1787d8;
    stroke-width: 1.3;
}

.node.thick {
    stroke-width: 3;
}

/* Status bar */
.status {
    height: 32px;
    display: flex;
    align-items: center;
    padding: 2px 3px 2px 0;
}

.prompt {
    width: 193px;
    padding-left: 2px;
    white-space: nowrap;
    overflow: hidden;
}

.cell {
    flex: none;
    width: 33px;
    height: 28px;
    display: flex;
    align-items: center;
    justify-content: center;
    border-left: 1px solid #999;
}

.cell .big {
    width: 22px;
    height: 22px;
}

.cell.message {
    width: 366px;
    position: relative;
    justify-content: flex-start;
}

.message span {
    width: 357px;
    overflow: hidden;
    white-space: nowrap;
}

.message .caret {
    position: absolute;
    top: 3px;
    left: -5px;
    color: #000;
}

.cell.level {
    width: 145px;
    padding-left: 2px;
    justify-content: flex-start;
}

.cell.count {
    flex: 1;
    gap: 10px;
    padding-left: 9px;
    justify-content: flex-start;
}

/* Watermark over the title bar */
.watermark {
    position: absolute;
    top: 16px;
    right: 14px;
    width: 106px;
    font-family: "Liberation Sans", sans-serif;
    font-weight: bold;
    pointer-events: none;
}

.mark {
    height: 33px;
    display: flex;
    justify-content: space-between;
    align-items: center;
    padding-top: 6px;
    border-bottom: 1px solid #fff;
    background: rgba(92, 151, 214, 0.7);
    box-shadow: 0 2px 0 rgba(92, 151, 214, 0.7);
    font-size: 36px;
    color: #fff;
}

.mark-sub {
    margin-top: 2px;
    text-align: center;
    font-size: 14px;
    color: #8d8d8d;
}

/* Taskbar */
.taskbar {
    height: 40px;
    display: flex;
    align-items: stretch;
    background: #222;
    color: #fff;
}

.start {
    width: 48px;
}

.task-search {
    width: 344px;
    display: flex;
    align-items: center;
    gap: 9px;
    padding-left: 10px;
    border: 1px solid #555;
    background: #333;
    font-size: 14px;
}

.task-search svg {
    width: 20px;
    height: 20px;
}

.task-search input {
    flex: 1;
    padding: 0;
    border: none;
    background: none;
    outline: none;
}

.task-search input::placeholder {
    color: #d0d0d0;
}

.pinned {
    display: flex;
    margin-left: -1px;
}

.pinned button {
    width: 50px;
}

.pinned svg {
    width: 24px;
    height: 24px;
}

.running {
    box-shadow: inset 0 -2px #aaa;
}

.current {
    background: #4c4c4c;
}

.tray {
    display: flex;
    align-items: center;
    gap: 8px;
    margin-left: auto;
    padding-right: 23px;
}

.weather {
    width: 22px;
    height: 22px;
}

.temp {
    margin-right: 7px;
    font-size: 14px;
}

.lang,
.clock {
    display: flex;
    flex-direction: column;
    align-items: center;
    font-size: 12px;
    line-height: 18px;
}

.lang {
    margin: 0 4px 0 2px;
    align-items: flex-start;
}

.notify {
    width: 20px;
    height: 20px;
    margin-left: 12px;
}
```
